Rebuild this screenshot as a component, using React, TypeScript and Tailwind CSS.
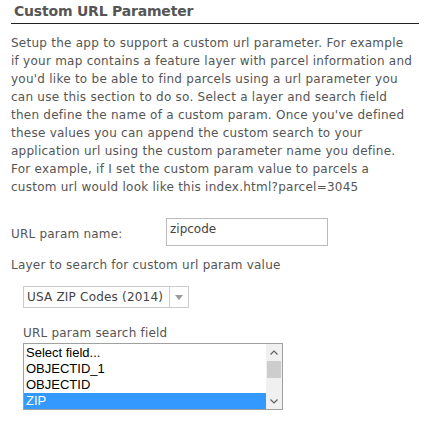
import React from "react";

export default function App() {
  const lines = [
    "Setup the app to support a custom url parameter. For example",
    "if your map contains a feature layer with parcel information and",
    "you'd like to be able to find parcels using a url parameter you",
    "can use this section to do so. Select a layer and search field",
    "then define the name of a custom param. Once you've defined",
    "these values you can append the custom search to your",
    "application url using the custom parameter name you define.",
    "For example, if I set the custom param value to parcels a",
    "custom url would look like this index.html?parcel=3045",
  ];
  const items = ["Select field...", "OBJECTID_1", "OBJECTID", "ZIP"];
  return (
    <div className="w-[439px] h-[441px] bg-white text-[#555] font-['DejaVu_Sans',Verdana,sans-serif] overflow-hidden">
      <div className="ml-[11px] w-[408px] border-b border-[#222] pt-[2px] pb-[3px] pl-[3px] text-[14px] leading-[18px] font-bold tracking-[-0.2px] text-[#555]">
        Custom URL Parameter
      </div>
      <div className="ml-[11px] mt-[10px] text-[12px] leading-[18px] tracking-[0.25px] whitespace-nowrap">
        {lines.map((l, i) => (
          <div key={i}>{l}</div>
        ))}
      </div>
      <div className="ml-[11px] mt-[22px] flex items-center text-[12px] leading-[18px] tracking-[0.2px]">
        <div className="w-[155px] pt-[3px]">URL param name:</div>
        <div className="w-[162px] h-[28px] border border-[#bbb] pl-[3px] pt-[1px] text-[#444] tracking-normal">zipcode</div>
      </div>
      <div className="ml-[11px] mt-[10px] text-[12px] leading-[18px] tracking-[0.22px]">Layer to search for custom url param value</div>
      <div className="ml-[23px] mt-[12px] flex h-[22px] w-[166px] border border-[#ccc] text-[12px] text-[#444]">
        <div className="flex-1 pl-[3px] leading-[20px] whitespace-nowrap tracking-[0.2px]">USA ZIP Codes (2014)</div>
        <div className="w-[19px] border-l border-[#ccc] flex items-center justify-center">
          <svg width="8" height="5" viewBox="0 0 8 5">
            <path d="M0 0 L8 0 L4 5 Z" fill="#9a9a9a" />
          </svg>
        </div>
      </div>
      <div className="ml-[23px] mt-[16px] text-[12px] leading-[18px] tracking-[0.2px]">URL param search field</div>
      <div className="ml-[23px] mt-[1px] w-[260px] h-[67px] border border-[#a0a0a0] flex bg-white">
        <div className="flex-1 pt-[1px] font-['Liberation_Sans',Arial,sans-serif] text-[13px] text-black">
          {items.map((it, i) => (
            <div
              key={i}
              className={
                i === 3
                  ? "h-[16px] leading-[16px] pl-[2px] bg-[#3399ff] text-white"
                  : "h-[16px] leading-[16px] pl-[2px]"
              }
            >
              {it}
            </div>
          ))}
        </div>
        <div className="w-[16px] bg-[#f0f0f0] flex flex-col items-center">
          <div className="h-[17px] flex items-center justify-center">
            <svg width="8" height="5" viewBox="0 0 8 5">
              <path d="M0.5 4.5 L4 1 L7.5 4.5" stroke="#606060" strokeWidth="1.2" fill="none" />
            </svg>
          </div>
          <div className="w-[14px] h-[17px] bg-[#cdcdcd]" />
          <div className="flex-1" />
          <div className="h-[16px] flex items-center justify-center">
            <svg width="8" height="5" viewBox="0 0 8 5">
              <path d="M0.5 0.5 L4 4 L7.5 0.5" stroke="#606060" strokeWidth="1.2" fill="none" />
            </svg>
          </div>
        </div>
      </div>
    </div>
  );
}
